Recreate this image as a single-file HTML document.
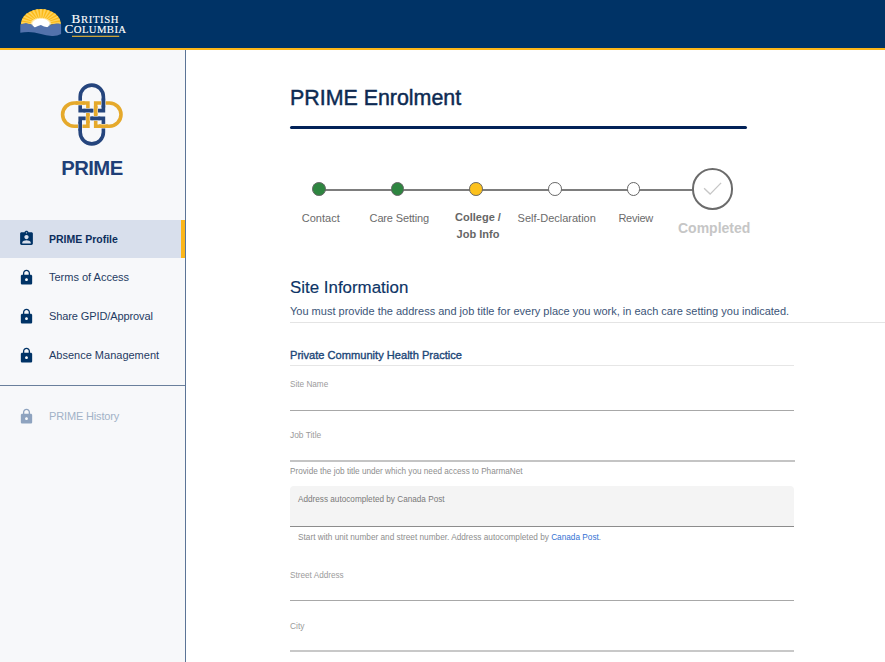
<!DOCTYPE html>
<html><head><meta charset="utf-8">
<style>
*{margin:0;padding:0;box-sizing:border-box}
html,body{width:885px;height:662px;overflow:hidden;background:#fff;font-family:"Liberation Sans",sans-serif}
.a{position:absolute;white-space:nowrap;line-height:1}
#hdr{position:absolute;left:0;top:0;width:885px;height:48px;background:#003366}
#hdrline{position:absolute;left:0;top:47.8px;width:885px;height:2.7px;background:#fcb719}
#side{position:absolute;left:0;top:50px;width:185px;height:612px;background:#f7f8fa}
#sideline{position:absolute;left:185px;top:50px;width:1.3px;height:612px;background:#5c7496}
.nav{position:absolute;left:49px;font-size:11px;color:#1f3b63}
.ico{position:absolute;left:18px;width:17px;height:17px}
</style></head>
<body>
<div id="hdr"></div>
<div id="side"></div>
<div id="sideline"></div>
<div id="hdrline"></div>

<!-- BC logo -->
<svg class="a" style="left:0;top:0" width="140" height="48" viewBox="0 0 140 48">
  <defs>
    <clipPath id="dome"><path d="M20.9 24.4 A20 15.4 0 0 1 60.9 24.4 Z"/></clipPath>
    <radialGradient id="glow" cx="0.5" cy="0.5" r="0.5">
      <stop offset="0" stop-color="#fff" stop-opacity="1"/>
      <stop offset="0.72" stop-color="#fff" stop-opacity="1"/>
      <stop offset="1" stop-color="#fff" stop-opacity="0"/>
    </radialGradient>
    <radialGradient id="rayfade" cx="0.5" cy="1" r="1">
      <stop offset="0" stop-color="#fff3c4" stop-opacity="1"/>
      <stop offset="0.7" stop-color="#ffd460" stop-opacity="0.9"/>
      <stop offset="1" stop-color="#fcba19" stop-opacity="0"/>
    </radialGradient>
  </defs>
  <path d="M20.9 24.4 A20 15.4 0 0 1 60.9 24.4 Z" fill="#fcba19"/>
  <path clip-path="url(#dome)" fill="#ffd766" opacity="0.85" d="M40.9 24.2 L14.93 23.21 L15.23 20.96 Z M40.9 24.2 L15.76 19.02 L16.66 16.87 Z M40.9 24.2 L17.69 15.06 L19.14 13.10 Z M40.9 24.2 L20.64 11.49 L22.58 9.81 Z M40.9 24.2 L24.47 8.48 L26.82 7.15 Z M40.9 24.2 L29.02 6.16 L31.67 5.24 Z M40.9 24.2 L34.08 4.63 L36.92 4.16 Z M40.9 24.2 L39.45 3.95 L42.35 3.95 Z M40.9 24.2 L44.88 4.16 L47.72 4.63 Z M40.9 24.2 L50.13 5.24 L52.78 6.16 Z M40.9 24.2 L54.98 7.15 L57.33 8.48 Z M40.9 24.2 L59.22 9.81 L61.16 11.49 Z M40.9 24.2 L62.66 13.10 L64.11 15.06 Z M40.9 24.2 L65.14 16.87 L66.04 19.02 Z M40.9 24.2 L66.57 20.96 L66.87 23.21 Z"/>
  <ellipse cx="40.9" cy="23.8" rx="11" ry="6.5" fill="url(#glow)"/>
  <path d="M20.3 24.4 L23 23.7 L26 23.1 L28.9 23.9 L31 24.3 L34.6 27.6 L38 26 L40.9 25 L44 26.4 L47.4 27.3 L50 25.5 L53.9 23.9 L56.5 23.6 L58.5 23.4 L61.1 24.3 L61.1 34.1 Q57 36.2 51.8 35.9 Q46 35.4 40.9 34 Q34 32.2 28.4 32 Q24 32 20.3 32.8 Z" fill="#5372ac"/>
  <text x="71.6" y="22.8" fill="#fff" stroke="#fff" stroke-width="0.12" font-family="Liberation Serif" font-size="13.2" letter-spacing="0.6">B<tspan font-size="10.7">RITISH</tspan></text>
  <text x="64.6" y="33" fill="#fff" stroke="#fff" stroke-width="0.12" font-family="Liberation Serif" font-size="13.2" letter-spacing="0.4">C<tspan font-size="10.7">OLUMBIA</tspan></text>
  <rect x="72" y="35.7" width="47.2" height="1.3" fill="#c9a33b"/>
</svg>

<!-- PRIME logo -->
<svg class="a" style="left:0;top:60px" width="185" height="130" viewBox="0 60 185 130">
  <g fill="none" stroke-width="3.6" stroke-linejoin="miter">
    <!-- gold left D -->
    <path d="M87.9 103 H74.2 A11.6 11.6 0 0 0 74.2 126.2 H87.9 Z" stroke="#e5a92b"/>
    <!-- gold right D -->
    <path d="M95.7 103 H109.4 A11.6 11.6 0 0 1 109.4 126.2 H95.7 Z" stroke="#e5a92b"/>
    <!-- blue top D -->
    <path d="M80.2 110.6 V96.7 A11.6 11.6 0 0 1 103.4 96.7 V110.6 Z" stroke="#25457d"/>
    <!-- blue bottom D -->
    <path d="M80.2 118.4 V132.3 A11.6 11.6 0 0 0 103.4 132.3 V118.4 Z" stroke="#25457d"/>
    <!-- over crossings -->
    <g stroke="#f7f8fa" stroke-width="4.5"><path d="M77.7 103 H82.7"/><path d="M85.4 110.6 H90.4"/><path d="M87.9 115.9 V120.9"/><path d="M80.2 123.7 V128.7"/><path d="M103.4 100.5 V105.5"/><path d="M95.7 108.1 V113.1"/><path d="M93.2 118.4 H98.2"/><path d="M100.9 126.2 H105.9"/></g>
    <path d="M75.7 103 H84.7" stroke="#e5a92b"/>
    <path d="M83.4 110.6 H92.4" stroke="#25457d"/>
    <path d="M87.9 113.9 V122.9" stroke="#e5a92b"/>
    <path d="M80.2 121.7 V130.7" stroke="#25457d"/>
    <path d="M103.4 98.5 V107.5" stroke="#25457d"/>
    <path d="M95.7 106.1 V115.1" stroke="#e5a92b"/>
    <path d="M91.2 118.4 H100.2" stroke="#25457d"/>
    <path d="M98.9 126.2 H107.9" stroke="#e5a92b"/>
  </g>
  <text x="61.2" y="174.7" fill="#1f3f77" font-size="20.3" font-weight="bold" font-family="Liberation Sans" letter-spacing="-0.55">PRIME</text>
</svg>

<!-- Nav -->
<div class="a" style="left:0;top:220px;width:181px;height:38px;background:#d8dfec"></div>
<div class="a" style="left:181px;top:220px;width:4px;height:38px;background:#fcb619"></div>

<svg class="ico" style="top:230.3px" viewBox="0 0 24 24"><path fill="#003366" d="M19 3h-4.18C14.4 1.84 13.3 1 12 1c-1.3 0-2.4.84-2.82 2H5c-1.1 0-2 .9-2 2v14c0 1.1.9 2 2 2h14c1.1 0 2-.9 2-2V5c0-1.1-.9-2-2-2zm-7 0c.55 0 1 .45 1 1s-.45 1-1 1-1-.45-1-1 .45-1 1-1zm0 4c1.66 0 3 1.34 3 3s-1.34 3-3 3-3-1.34-3-3 1.34-3 3-3zm6 12H6v-1.4c0-2 4-3.1 6-3.1s6 1.1 6 3.1V19z"/></svg>
<div class="a nav" style="top:233.6px;font-weight:bold;color:#0c2e5c;font-size:10.5px">PRIME Profile</div>

<svg class="ico" style="top:269.3px" viewBox="0 0 24 24"><path fill="#003366" d="M18 8h-1V6c0-2.76-2.24-5-5-5S7 3.24 7 6v2H6c-1.1 0-2 .9-2 2v10c0 1.1.9 2 2 2h12c1.1 0 2-.9 2-2V10c0-1.1-.9-2-2-2zm-6 9c-1.1 0-2-.9-2-2s.9-2 2-2 2 .9 2 2-.9 2-2 2zm3.1-9H8.9V6c0-1.71 1.39-3.1 3.1-3.1 1.71 0 3.1 1.39 3.1 3.1v2z"/></svg>
<div class="a nav" style="top:272px">Terms of Access</div>

<svg class="ico" style="top:308.3px" viewBox="0 0 24 24"><path fill="#003366" d="M18 8h-1V6c0-2.76-2.24-5-5-5S7 3.24 7 6v2H6c-1.1 0-2 .9-2 2v10c0 1.1.9 2 2 2h12c1.1 0 2-.9 2-2V10c0-1.1-.9-2-2-2zm-6 9c-1.1 0-2-.9-2-2s.9-2 2-2 2 .9 2 2-.9 2-2 2zm3.1-9H8.9V6c0-1.71 1.39-3.1 3.1-3.1 1.71 0 3.1 1.39 3.1 3.1v2z"/></svg>
<div class="a nav" style="top:311.3px;letter-spacing:-0.1px">Share GPID/Approval</div>

<svg class="ico" style="top:347.3px" viewBox="0 0 24 24"><path fill="#003366" d="M18 8h-1V6c0-2.76-2.24-5-5-5S7 3.24 7 6v2H6c-1.1 0-2 .9-2 2v10c0 1.1.9 2 2 2h12c1.1 0 2-.9 2-2V10c0-1.1-.9-2-2-2zm-6 9c-1.1 0-2-.9-2-2s.9-2 2-2 2 .9 2 2-.9 2-2 2zm3.1-9H8.9V6c0-1.71 1.39-3.1 3.1-3.1 1.71 0 3.1 1.39 3.1 3.1v2z"/></svg>
<div class="a nav" style="top:349.6px">Absence Management</div>

<div class="a" style="left:0;top:385px;width:185px;height:1.2px;background:#6a7f9c"></div>

<svg class="ico" style="top:408.3px" viewBox="0 0 24 24"><path fill="#8ea3bf" d="M18 8h-1V6c0-2.76-2.24-5-5-5S7 3.24 7 6v2H6c-1.1 0-2 .9-2 2v10c0 1.1.9 2 2 2h12c1.1 0 2-.9 2-2V10c0-1.1-.9-2-2-2zm-6 9c-1.1 0-2-.9-2-2s.9-2 2-2 2 .9 2 2-.9 2-2 2zm3.1-9H8.9V6c0-1.71 1.39-3.1 3.1-3.1 1.71 0 3.1 1.39 3.1 3.1v2z"/></svg>
<div class="a nav" style="top:410.6px;color:#a2b2c7;letter-spacing:-0.15px">PRIME History</div>

<!-- Main -->
<div class="a" style="left:290px;top:87.5px;font-size:21.4px;color:#0d2a52;-webkit-text-stroke:0.45px #0d2a52">PRIME Enrolment</div>
<div class="a" style="left:290px;top:126px;width:457px;height:3px;border-radius:2px;background:#022258"></div>

<!-- stepper -->
<div class="a" style="left:318px;top:189px;width:394px;height:1.8px;background:#7d7d7d"></div>
<div class="a" style="left:311.9px;top:182.2px;width:13.8px;height:13.8px;border-radius:50%;background:#2e8540;border:1.2px solid #666"></div>
<div class="a" style="left:390.6px;top:182.2px;width:13.8px;height:13.8px;border-radius:50%;background:#2e8540;border:1.2px solid #666"></div>
<div class="a" style="left:469.1px;top:182.2px;width:13.8px;height:13.8px;border-radius:50%;background:#fcc11c;border:1.2px solid #666"></div>
<div class="a" style="left:547.9px;top:182.2px;width:13.8px;height:13.8px;border-radius:50%;background:#fff;border:1.2px solid #666"></div>
<div class="a" style="left:626.5px;top:182.2px;width:13.8px;height:13.8px;border-radius:50%;background:#fff;border:1.2px solid #666"></div>
<div class="a" style="left:691.5px;top:168.3px;width:41.4px;height:41.4px;border-radius:50%;background:#fff;border:2.9px solid #6b6b6b"></div>
<svg class="a" style="left:700px;top:178px" width="26" height="22" viewBox="700 178 26 22"><path d="M704.1 188.3 L710.1 194.1 L721.1 182.9" fill="none" stroke="#c6c6c6" stroke-width="1.35"/></svg>

<div class="a" style="left:301.8px;top:213.2px;font-size:11px;color:#6b6b6b">Contact</div>
<div class="a" style="left:369.6px;top:213.2px;font-size:11px;color:#6b6b6b;letter-spacing:-0.15px">Care Setting</div>
<div class="a" style="left:448px;top:209px;font-size:11px;color:#666;font-weight:bold;text-align:center;line-height:17px;width:60px;white-space:normal">College /<br>Job Info</div>
<div class="a" style="left:517.6px;top:213.2px;font-size:11px;color:#6b6b6b">Self-Declaration</div>
<div class="a" style="left:618.4px;top:213.2px;font-size:11px;color:#6b6b6b;letter-spacing:-0.25px">Review</div>
<div class="a" style="left:678px;top:221.4px;font-size:14px;color:#c6c6c6;font-weight:bold">Completed</div>

<!-- Site information -->
<div class="a" style="left:290px;top:280px;font-size:16.9px;color:#0d3466;-webkit-text-stroke:0.15px #0d3466">Site Information</div>
<div class="a" style="left:290px;top:306px;font-size:11px;color:#3b5578">You must provide the address and job title for every place you work, in each care setting you indicated.</div>
<div class="a" style="left:290px;top:322px;width:595px;height:1px;background:#e4e4e4"></div>

<div class="a" style="left:290px;top:350px;font-size:11.1px;color:#1b4677;-webkit-text-stroke:0.35px #1b4677">Private Community Health Practice</div>
<div class="a" style="left:290px;top:365px;width:504px;height:1px;background:#e6e6e6"></div>

<div class="a" style="left:290px;top:381px;font-size:8.2px;color:#9b9b9b">Site Name</div>
<div class="a" style="left:290px;top:409.7px;width:504px;height:1.2px;background:#a8a8a8"></div>

<div class="a" style="left:290px;top:431px;font-size:8.4px;color:#9b9b9b">Job Title</div>
<div class="a" style="left:290px;top:459.8px;width:504.5px;height:2px;background:#c4c4c4"></div>
<div class="a" style="left:290px;top:468px;font-size:8.2px;color:#8e8e8e">Provide the job title under which you need access to PharmaNet</div>

<div class="a" style="left:290px;top:486.4px;width:504px;height:40.8px;background:#f4f4f4;border-radius:4px 4px 0 0;border-bottom:1.2px solid #8c8c8c"></div>
<div class="a" style="left:298px;top:496.4px;font-size:8.2px;color:#7a7a7a">Address autocompleted by Canada Post</div>
<div class="a" style="left:298px;top:533.5px;font-size:8.25px;color:#8e8e8e">Start with unit number and street number. Address autocompleted by <span style="color:#3472d3">Canada Post</span>.</div>

<div class="a" style="left:290px;top:571.5px;font-size:8.2px;color:#9b9b9b">Street Address</div>
<div class="a" style="left:290px;top:600px;width:504px;height:1.2px;background:#a8a8a8"></div>

<div class="a" style="left:290px;top:622.2px;font-size:8.4px;color:#9b9b9b">City</div>
<div class="a" style="left:290px;top:650.2px;width:504px;height:1.5px;background:#c8c8c8"></div>

</body></html>
